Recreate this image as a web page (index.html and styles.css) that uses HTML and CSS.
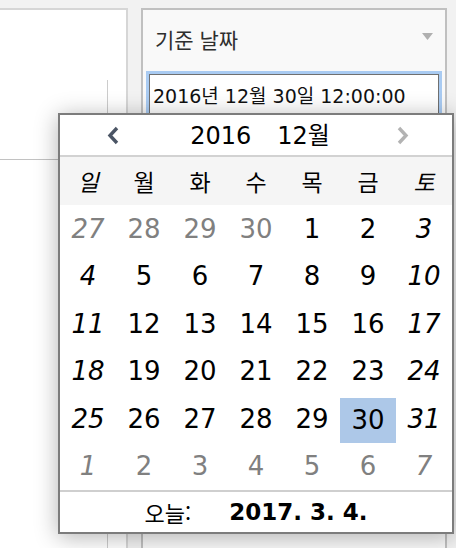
FILE: index.html
```html
<!DOCTYPE html>
<html lang="ko">
<head>
<meta charset="utf-8">
<link rel="stylesheet" href="styles.css">
</head>
<body>
<div class="page">
  <div class="left-panel">
    <div class="left-top"><div class="vline"></div></div>
    <div class="left-bottom"><div class="vline"></div></div>
  </div>
  <div class="right-panel">
    <div class="field-label">
      <span>기준 날짜</span>
      <svg class="caret" width="11" height="7" viewBox="0 0 11 7"><polygon points="0,0 11,0 5.5,7" fill="#b0b0b0"/></svg>
    </div>
    <div class="input">2016년 12월 30일 12:00:00</div>
  </div>
</div>

<div class="popup">
  <div class="cal-header">
    <svg class="nav" width="12" height="19" viewBox="0 0 12 19"><polyline points="10,2 3,9.5 10,17" fill="none" stroke="#4b5565" stroke-width="3.4"/></svg>
    <div class="title"><span>2016</span><span>12월</span></div>
    <svg class="nav" width="12" height="19" viewBox="0 0 12 19"><polyline points="2,2 9,9.5 2,17" fill="none" stroke="#b3b3b3" stroke-width="3.4"/></svg>
  </div>
  <div class="weekdays">
    <span class="we">일</span><span>월</span><span>화</span><span>수</span><span>목</span><span>금</span><span class="we">토</span>
  </div>
  <div class="days">
    <span class="we other">27</span><span class="other">28</span><span class="other">29</span><span class="other">30</span><span>1</span><span>2</span><span class="we">3</span>
    <span class="we">4</span><span>5</span><span>6</span><span>7</span><span>8</span><span>9</span><span class="we">10</span>
    <span class="we">11</span><span>12</span><span>13</span><span>14</span><span>15</span><span>16</span><span class="we">17</span>
    <span class="we">18</span><span>19</span><span>20</span><span>21</span><span>22</span><span>23</span><span class="we">24</span>
    <span class="we">25</span><span>26</span><span>27</span><span>28</span><span>29</span><span class="sel">30</span><span class="we">31</span>
    <span class="we other">1</span><span class="other">2</span><span class="other">3</span><span class="other">4</span><span class="other">5</span><span class="other">6</span><span class="we other">7</span>
  </div>
  <div class="cal-footer">
    <span class="today-label">오늘:</span>
    <span class="today-date">2017. 3. 4.</span>
  </div>
</div>
</body>
</html>
```

FILE: styles.css
```css
html, body {
  margin: 0;
  padding: 0;
}
body {
  background: #f2f2f2;
  font-family: "DejaVu Sans", "Noto Sans CJK KR", sans-serif;
  width: 456px;
  height: 548px;
  overflow: hidden;
  position: relative;
}
.page {
  display: flex;
  gap: 13px;
  padding-top: 8px;
  height: 548px;
  box-sizing: border-box;
}
.left-panel {
  width: 128px;
  box-sizing: border-box;
  background: #ffffff;
  border-top: 2px solid #d6d6d6;
  border-right: 2px solid #d6d6d6;
  display: flex;
  flex-direction: column;
}
.left-top {
  height: 150px;
  border-bottom: 1px solid #c2c2c2;
  display: flex;
  flex-direction: column;
  padding-top: 70px;
  box-sizing: border-box;
}
.left-bottom {
  flex: 1;
  display: flex;
  flex-direction: column;
}
.vline {
  flex: 1;
  width: 1px;
  margin-left: 107px;
  background: #cccccc;
}
.right-panel {
  width: 306px;
  box-sizing: border-box;
  background: #f9f9f9;
  border: 2px solid #c0c0c0;
  border-bottom: none;
  display: flex;
  flex-direction: column;
}
.field-label {
  height: 60px;
  display: flex;
  align-items: center;
  justify-content: space-between;
  padding: 0 12px 2px 12px;
  box-sizing: border-box;
  font-family: "Noto Sans CJK KR", sans-serif;
  font-size: 21px;
  color: #2e2e2e;
}
.caret {
  margin-top: -6px;
}
.input {
  margin: 4px 6px 0 6px;
  height: 40px;
  box-sizing: border-box;
  border: 1px solid #707070;
  box-shadow: 0 0 0 3px #a9cbf2;
  background: #ffffff;
  padding: 0 0 0 3px;
  display: flex;
  align-items: center;
  font-family: "DejaVu Sans", "Noto Sans CJK KR", sans-serif;
  font-size: 19px;
  color: #111111;
}

.popup {
  position: absolute;
  left: 58px;
  top: 113px;
  width: 396px;
  height: 421px;
  box-sizing: border-box;
  border: 2px solid #7c7c7c;
  background: #ffffff;
  box-shadow: 0 3px 22px rgba(0, 0, 0, 0.3);
  display: flex;
  flex-direction: column;
}
.cal-header {
  height: 40px;
  display: flex;
  align-items: center;
  justify-content: space-between;
  padding: 0 43px 0 47px;
  border-bottom: 2px solid #d2d2d2;
}
.title {
  display: flex;
  align-items: baseline;
  gap: 26px;
  font-family: "DejaVu Sans", "Noto Sans CJK KR", sans-serif;
  font-size: 24px;
  line-height: 30px;
  color: #000000;
  margin-left: 4px;
  margin-top: 2px;
}
.weekdays {
  height: 48px;
  background: #f5f5f5;
  display: grid;
  grid-template-columns: repeat(7, 56px);
  align-items: center;
  justify-items: center;
  font-family: "Noto Sans CJK KR", sans-serif;
  font-size: 23px;
  color: #000000;
}
.days {
  height: 285px;
  display: grid;
  grid-template-columns: repeat(7, 56px);
  grid-template-rows: repeat(6, 47.5px);
  font-size: 26px;
  color: #000000;
}
.days span {
  display: flex;
  align-items: center;
  justify-content: center;
}
.we {
  font-style: italic;
}
.other {
  color: #808080;
}
.days .sel {
  background: #adc8e8;
  margin-top: 3px;
}
.cal-footer {
  flex: 1;
  border-top: 2px solid #cfcfcf;
  display: flex;
  align-items: center;
  justify-content: center;
  gap: 36px;
  color: #000000;
}
.today-label {
  font-family: "Noto Sans CJK KR", sans-serif;
  font-size: 22px;
}
.today-date {
  font-family: "DejaVu Sans", sans-serif;
  font-weight: bold;
  font-size: 23px;
  margin-left: 2px;
}
```
